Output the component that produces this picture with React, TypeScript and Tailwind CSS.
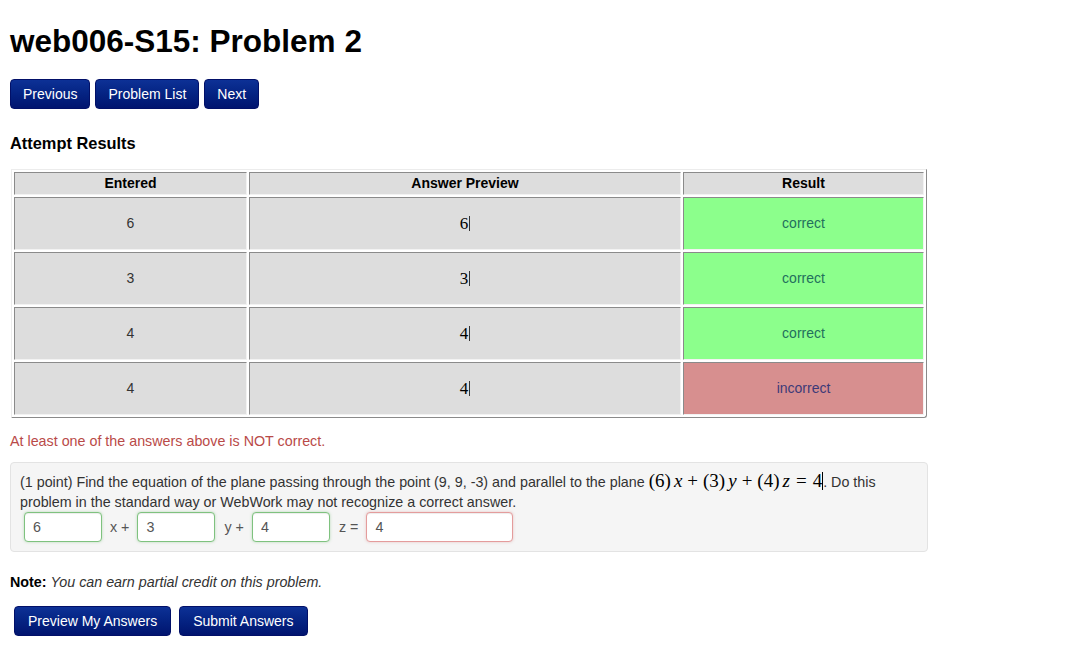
import React from "react";

const rows = [
  { entered: "6", preview: "6", ok: true },
  { entered: "3", preview: "3", ok: true },
  { entered: "4", preview: "4", ok: true },
  { entered: "4", preview: "4", ok: false },
];

const NavButton = ({ label, wide }: { label: string; wide?: boolean }) => (
  <button
    className={`h-[30px] ${wide ? "px-[13px]" : "px-[12px]"} rounded-[4px] border border-[#021068] bg-gradient-to-b from-[#0d3196] to-[#01146f] text-white text-[14px] leading-[20px]`}
  >
    {label}
  </button>
);

const cellBorder =
  "border border-t-[#8a8a8a] border-l-[#8a8a8a] border-b-[#f2f2f2] border-r-[#f2f2f2]";

const Preview = ({ value }: { value: string }) => (
  <span className="inline-flex items-center font-['Liberation_Serif',serif] text-[17px] text-black">
    {value}
    <span className="inline-block w-px h-[15px] bg-[#333] ml-[1px]" />
  </span>
);

const AnswerInput = ({ value, ok, wide }: { value: string; ok: boolean; wide?: boolean }) => (
  <input
    readOnly
    value={value}
    className={`h-[30px] ${wide ? "w-[147px]" : "w-[78px]"} rounded-[4px] border px-[8px] text-[14.3px] text-[#555] bg-white outline-none ${
      ok
        ? "border-[#7fc27f] shadow-[inset_0_1px_1px_rgba(0,0,0,0.075),0_0_3px_rgba(70,170,70,0.35)]"
        : "border-[#e49c9c] shadow-[inset_0_1px_1px_rgba(0,0,0,0.075),0_0_3px_rgba(200,80,80,0.3)]"
    }`}
  />
);

const MathEq = () => (
  <span className="font-['Liberation_Serif',serif] text-[19px] leading-[20px] text-black whitespace-nowrap">
    (6)<i className="ml-[3px]">x</i>
    <span className="mx-[5px]">+</span>(3)<i className="ml-[3px]">y</i>
    <span className="mx-[5px]">+</span>(4)<i className="ml-[3px]">z</i>
    <span className="mx-[6px]">=</span>4
    <span className="inline-block w-px h-[18px] bg-black align-[-3px]" />
  </span>
);

export default function App() {
  return (
    <div className="min-h-screen bg-white px-[10px] font-['Liberation_Sans',Arial,sans-serif] text-[#333]">
      <h2 className="pt-[21px] text-[31.5px] leading-[40px] font-bold text-black">web006-S15: Problem 2</h2>

      <div className="mt-[18px] flex gap-[5px]">
        <NavButton label="Previous" />
        <NavButton label="Problem List" />
        <NavButton label="Next" />
      </div>

      <h3 className="mt-[23px] text-[16.4px] leading-[22px] font-bold text-black">Attempt Results</h3>

      <table className="mt-[15px] ml-px w-[916px] border-separate border-spacing-[2px] border border-t-[#ececec] border-l-[#ececec] border-b-[#8a8a8a] border-r-[#8a8a8a] rounded-br-[3px] text-[14px] text-center">
        <thead>
          <tr>
            <th className={`${cellBorder} w-[233px] h-[23px] bg-[#dddddd] font-bold text-black`}>Entered</th>
            <th className={`${cellBorder} w-[432px] h-[23px] bg-[#dddddd] font-bold text-black`}>Answer Preview</th>
            <th className={`${cellBorder} h-[23px] bg-[#dddddd] font-bold text-black`}>Result</th>
          </tr>
        </thead>
        <tbody>
          {rows.map((r, i) => (
            <tr key={i}>
              <td className={`${cellBorder} h-[53px] bg-[#dddddd] text-[#333]`}>{r.entered}</td>
              <td className={`${cellBorder} h-[53px] bg-[#dddddd]`}>
                <Preview value={r.preview} />
              </td>
              <td
                className={`${cellBorder} h-[53px] ${
                  r.ok ? "bg-[#8cff8c] text-[#23705c]" : "bg-[#d78f8f] text-[#3d3a78]"
                }`}
              >
                {r.ok ? "correct" : "incorrect"}
              </td>
            </tr>
          ))}
        </tbody>
      </table>

      <p className="mt-[13px] text-[14.3px] leading-[20px] text-[#b94a48]">
        At least one of the answers above is NOT correct.
      </p>

      <div className="mt-[11px] w-[918px] rounded-[4px] border border-[#e3e3e3] bg-[#f5f5f5] px-[9px] pt-[8px] pb-[9px] text-[14.3px] leading-[20px] text-[#333]">
        <div className="pr-[40px]">
          (1 point) Find the equation of the plane passing through the point (9, 9, -3) and parallel to the plane{" "}
          <MathEq />. Do this problem in the standard way or WebWork may not recognize a correct answer.
        </div>
        <div className="flex items-center">
          <span className="ml-[4px] flex">
            <AnswerInput value="6" ok />
          </span>
          <span className="ml-[8px] mr-[8px] text-[#555]">x +</span>
          <AnswerInput value="3" ok />
          <span className="ml-[9px] mr-[8px] text-[#555]">y +</span>
          <AnswerInput value="4" ok />
          <span className="ml-[9px] mr-[8px] text-[#555]">z =</span>
          <AnswerInput value="4" ok={false} wide />
        </div>
      </div>

      <p className="mt-[20px] text-[14.3px] leading-[20px] text-[#333]">
        <b className="text-black">Note:</b> <i>You can earn partial credit on this problem.</i>
      </p>

      <div className="mt-[14px] ml-[4px] flex gap-[8px]">
        <NavButton label="Preview My Answers" wide />
        <NavButton label="Submit Answers" wide />
      </div>
    </div>
  );
}
